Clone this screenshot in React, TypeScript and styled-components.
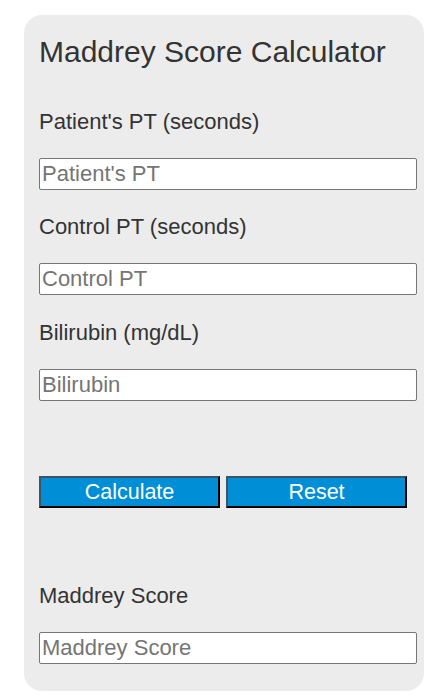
import React from "react";
import styled, { createGlobalStyle } from "styled-components";

const Global = createGlobalStyle`
  html, body { margin: 0; padding: 0; background: #ffffff; }
  body { font-family: "Liberation Sans", Arial, sans-serif; color: #333333; }
  * { box-sizing: border-box; }
`;

const Card = styled.div`
  margin: 15px 0 0 24px;
  width: 400px;
  height: 676px;
  background: #ececec;
  border-radius: 18px;
  padding: 20px 0 0 15px;
  display: flex;
  flex-direction: column;
`;

const Title = styled.h1`
  margin: 0 0 39.5px 0;
  font-size: 30px;
  line-height: 34px;
  font-weight: normal;
  color: #333333;
`;

const Label = styled.label`
  display: block;
  font-size: 22px;
  line-height: 25px;
  color: #333333;
  margin-bottom: 24px;
`;

const Input = styled.input<{ $after?: number }>`
  display: block;
  width: 378px;
  height: 32px;
  margin: 0 0 ${(p) => p.$after ?? 24.5}px 0;
  padding: 1px 2px;
  border: 1px solid #767676;
  border-radius: 2px;
  background: #ffffff;
  font-family: "Liberation Sans", Arial, sans-serif;
  font-size: 22px;
  color: #333333;
  outline: none;
  &::placeholder { color: #757575; }
`;

const ButtonRow = styled.div`
  display: flex;
  gap: 6px;
  margin: 75px 0 75.5px 0;
`;

const Button = styled.button`
  width: 181px;
  height: 32px;
  padding: 0;
  background: #008fd6;
  color: #ffffff;
  font-family: "Liberation Sans", Arial, sans-serif;
  font-size: 21.5px;
  line-height: 26px;
  border: 2px solid;
  border-color: #3b5566 #000000 #000000 #3b5566;
  cursor: pointer;
`;

export default function App() {
  return (
    <>
      <Global />
      <Card>
        <Title>Maddrey Score Calculator</Title>
        <Label>Patient's PT (seconds)</Label>
        <Input placeholder="Patient's PT" />
        <Label>Control PT (seconds)</Label>
        <Input placeholder="Control PT" />
        <Label>Bilirubin (mg/dL)</Label>
        <Input placeholder="Bilirubin" $after={0} />
        <ButtonRow>
          <Button>Calculate</Button>
          <Button>Reset</Button>
        </ButtonRow>
        <Label>Maddrey Score</Label>
        <Input placeholder="Maddrey Score" readOnly $after={0} />
      </Card>
    </>
  );
}
